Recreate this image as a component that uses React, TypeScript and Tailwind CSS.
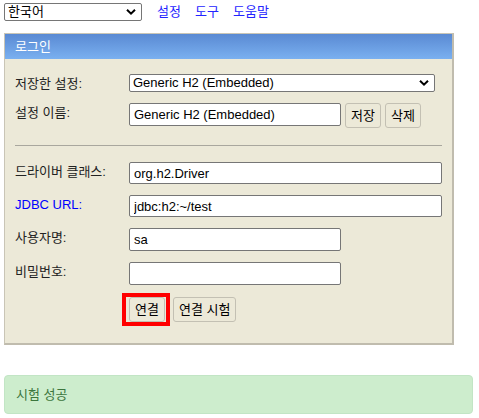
import React from 'react';

const FONT = { fontFamily: '"Liberation Sans", "Noto Sans CJK KR", sans-serif' };

const Chevron = () => (
  <svg className="pointer-events-none absolute right-[6px] top-1/2 -translate-y-1/2" width="10" height="7" viewBox="0 0 10 7">
    <path d="M1 1.2 L5 5.2 L9 1.2" fill="none" stroke="#000" strokeWidth="2" />
  </svg>
);

const Select = ({ value, className }: { value: string; className: string }) => (
  <div className={`relative ${className}`}>
    <select
      defaultValue={value}
      className="block w-full h-full appearance-none bg-white border border-[#767676] rounded-[2px] pl-[3px] pr-5 py-0 text-[13px] leading-[16px] outline-none"
    >
      <option>{value}</option>
    </select>
    <Chevron />
  </div>
);

const Field = ({ value, wide }: { value: string; wide?: boolean }) => (
  <input
    defaultValue={value}
    className={`block ${wide ? 'w-[314px] h-[22px]' : 'w-[212px] h-[23px]'} bg-white border border-[#767676] rounded-[2px] px-[4px] py-0 text-[13px] leading-[16px] outline-none`}
  />
);

const Btn = ({ children }: { children: React.ReactNode }) => (
  <button className="block h-[25px] px-[5px] py-0 bg-[#ece9d8] border border-[#c3c0b3] rounded-[3px] text-[13px] leading-[16px] text-black">
    {children}
  </button>
);

const Row = ({ label, blue, children, mt }: { label: string; blue?: boolean; children: React.ReactNode; mt: string }) => (
  <div className={`flex items-start ${mt}`}>
    <div className={`w-[114px] shrink-0 pt-[2px] text-[13px] leading-[16px] ${blue ? 'text-[#0000ff]' : 'text-[#222]'}`}>{label}</div>
    {children}
  </div>
);

export default function App() {
  return (
    <div className="w-[479px] h-[418px] bg-white overflow-hidden leading-[16px]" style={FONT}>
      <div className="flex items-start pl-[4px] pt-[3px] h-[21px]">
        <Select value="한국어" className="w-[138px] h-[18px]" />
        <div className="flex ml-[15px] pt-[1px] text-[13px] leading-[16px] text-[#2424ff]">
          <a className="w-[38px]">설정</a>
          <a className="w-[38px]">도구</a>
          <a>도움말</a>
        </div>
      </div>

      <div className="ml-[4px] mt-[12px] w-[450px] border border-[#c9c5b6] border-r-2 border-b-2 border-r-[#c0bcae] border-b-[#c0bcae] bg-[#ece9d8]">
        <div className="h-[25px] pl-[10px] flex items-center text-[13px] leading-[16px] text-white bg-gradient-to-b from-[#5a8ad3] to-[#7ab0f0]">
          로그인
        </div>
        <div className="pl-[10px] pr-[10px] pt-[15px] pb-[17px]">
          <Row label="저장한 설정:" mt="mt-0">
            <Select value="Generic H2 (Embedded)" className="w-[306px] h-[18px]" />
          </Row>
          <div className="flex items-start mt-[11px]">
            <div className="w-[114px] shrink-0 pt-[2px] text-[13px] leading-[16px] text-[#222]">설정 이름:</div>
            <Field value="Generic H2 (Embedded)" />
            <div className="flex gap-[4px] ml-[4px]">
              <Btn>저장</Btn>
              <Btn>삭제</Btn>
            </div>
          </div>
          <div className="mt-[17px] h-px bg-[#a9a79e]" />
          <Row label="드라이버 클래스:" mt="mt-[16px]">
            <Field value="org.h2.Driver" wide />
          </Row>
          <Row label="JDBC URL:" blue mt="mt-[11px]">
            <Field value="jdbc:h2:~/test" wide />
          </Row>
          <Row label="사용자명:" mt="mt-[11px]">
            <Field value="sa" />
          </Row>
          <Row label="비밀번호:" mt="mt-[11px]">
            <input type="password" className="block w-[212px] h-[23px] bg-white border border-[#767676] rounded-[2px] px-[4px] py-0 outline-none" />
          </Row>
          <div className="flex items-center mt-[8px] pl-[107px] gap-[3px]">
            <div className="border-4 border-[#ff0000] pl-[3px] pr-[1px]">
              <Btn>연결</Btn>
            </div>
            <Btn>연결 시험</Btn>
          </div>
        </div>
      </div>

      <div className="ml-[4px] mt-[30px] w-[469px] h-[39px] flex items-center pl-[11px] bg-[#cdedcd] border border-[#c2e5c5] rounded-[4px] text-[13px] leading-[16px] text-[#3c763d]">
        시험 성공
      </div>
    </div>
  );
}
